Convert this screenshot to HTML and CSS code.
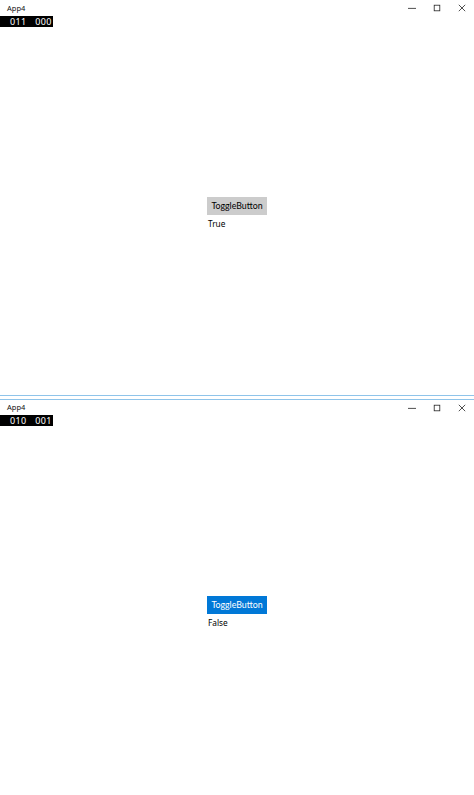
FILE: index.html
```html
<!DOCTYPE html>
<html>
<head>
<meta charset="utf-8">
<link rel="stylesheet" href="styles.css">
</head>
<body>
<div class="screen">
  <section class="window window-top">
    <header class="titlebar">
      <span class="title">App4</span>
      <div class="controls">
        <span class="ctl"><svg width="10" height="10" viewBox="0 0 10 10"><path d="M0 5.5h10" stroke="#222" stroke-width="1"/></svg></span>
        <span class="ctl"><svg width="10" height="10" viewBox="0 0 10 10"><rect x="1.5" y="1.5" width="7" height="7" fill="none" stroke="#222" stroke-width="1"/></svg></span>
        <span class="ctl"><svg width="10" height="10" viewBox="0 0 10 10"><path d="M1 1L9 9M9 1L1 9" stroke="#222" stroke-width="1"/></svg></span>
      </div>
    </header>
    <div class="counter"><span>011</span><span>000</span></div>
    <main class="content">
      <div class="stack">
        <button class="toggle toggle-off">ToggleButton</button>
        <div class="state">True</div>
      </div>
    </main>
  </section>
  <section class="window window-bottom">
    <header class="titlebar">
      <span class="title">App4</span>
      <div class="controls">
        <span class="ctl"><svg width="10" height="10" viewBox="0 0 10 10"><path d="M0 5.5h10" stroke="#222" stroke-width="1"/></svg></span>
        <span class="ctl"><svg width="10" height="10" viewBox="0 0 10 10"><rect x="1.5" y="1.5" width="7" height="7" fill="none" stroke="#222" stroke-width="1"/></svg></span>
        <span class="ctl"><svg width="10" height="10" viewBox="0 0 10 10"><path d="M1 1L9 9M9 1L1 9" stroke="#222" stroke-width="1"/></svg></span>
      </div>
    </header>
    <div class="counter"><span>010</span><span>001</span></div>
    <main class="content">
      <div class="stack">
        <button class="toggle toggle-on">ToggleButton</button>
        <div class="state">False</div>
      </div>
    </main>
  </section>
</div>
</body>
</html>
```

FILE: styles.css
```css
html, body {
  margin: 0;
  padding: 0;
  background: #fff;
}
body {
  font-family: "Noto Sans", "Open Sans", "DejaVu Sans", sans-serif;
  color: #000;
  width: 474px;
  height: 795px;
  overflow: hidden;
}
.screen {
  display: flex;
  flex-direction: column;
}
.window {
  display: flex;
  flex-direction: column;
  background: #fff;
  box-sizing: border-box;
}
.window-top {
  height: 396px;
  border-bottom: 1px solid #8fc4ea;
}
.window-bottom {
  height: 396px;
  margin-top: 3px;
  border-top: 1px solid #8fc4ea;
}
.titlebar {
  height: 16px;
  display: flex;
  align-items: center;
  justify-content: space-between;
  padding-left: 7px;
}
.window-bottom .titlebar {
  height: 15px;
}
.title {
  font-size: 7.5px;
  color: #111;
  line-height: 1;
  padding-top: 1px;
}
.controls {
  display: flex;
  height: 16px;
}
.ctl {
  width: 25px;
  display: flex;
  align-items: center;
  justify-content: center;
}
.ctl svg {
  width: 8px;
  height: 8px;
}
.counter {
  align-self: flex-start;
  background: #000;
  color: #fff;
  height: 11px;
  width: 53px;
  box-sizing: border-box;
  display: flex;
  align-items: center;
  gap: 9px;
  padding-left: 10px;
  font-size: 9px;
  line-height: 1;
  letter-spacing: 0.3px;
}
.content {
  flex: 1;
  position: relative;
}
.stack {
  display: flex;
  flex-direction: column;
  align-items: flex-start;
  padding-top: 170px;
  padding-left: 207px;
}
.toggle {
  width: 60px;
  height: 18px;
  border: none;
  padding: 0;
  margin: 0;
  font-family: "Lato", "Noto Sans", sans-serif;
  font-size: 8.8px;
  line-height: 18px;
}
.toggle-off {
  background: #cccccc;
  color: #000;
}
.toggle-on {
  background: #0078d7;
  color: #fff;
}
.state {
  font-size: 8.3px;
  margin-top: 3px;
  padding-left: 1px;
  line-height: 12px;
}
```
